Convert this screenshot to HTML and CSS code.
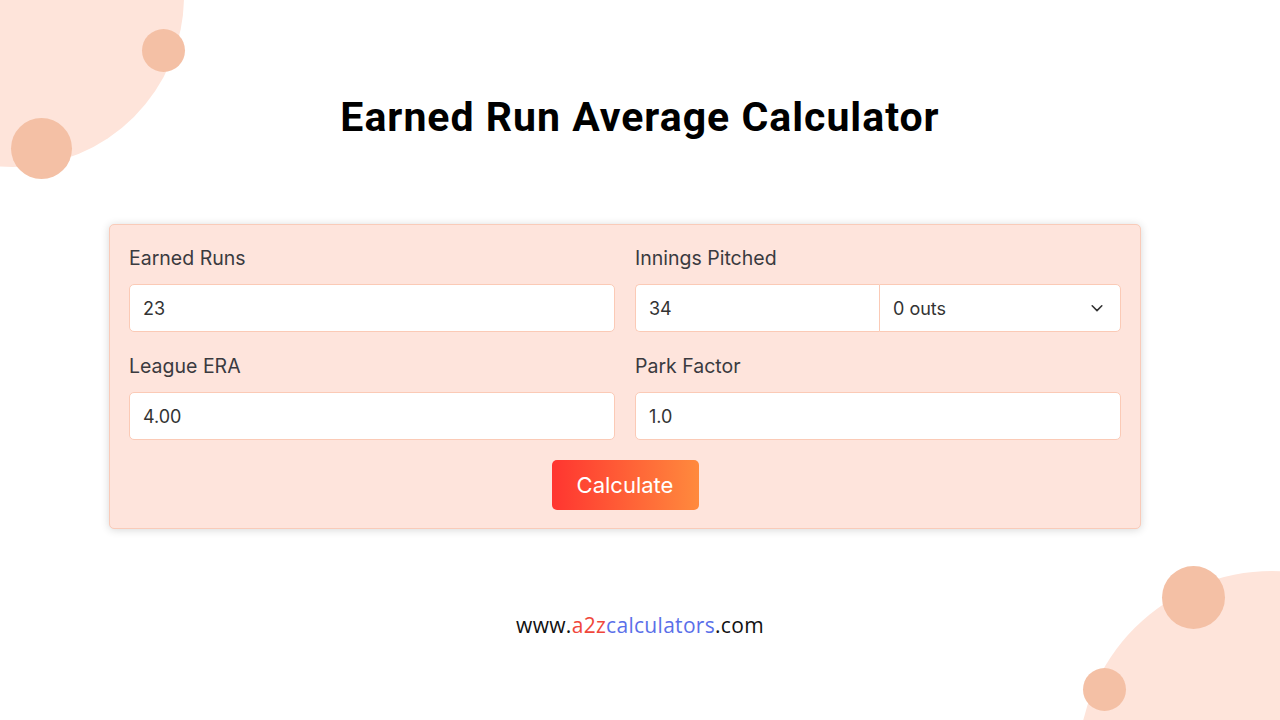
FILE: index.html
```html
<!DOCTYPE html>
<html lang="en">
<head>
<meta charset="utf-8">
<title>Earned Run Average Calculator</title>
<link rel="stylesheet" href="styles.css">
</head>
<body>
<div class="page">
  <div class="deco deco-tl-big"></div>
  <div class="deco deco-tl-dot1"></div>
  <div class="deco deco-tl-dot2"></div>
  <div class="deco deco-br-big"></div>
  <div class="deco deco-br-dot1"></div>
  <div class="deco deco-br-dot2"></div>

  <h1 class="title">Earned Run Average Calculator</h1>

  <form class="card">
    <div class="grid">
      <div class="field">
        <label class="label">Earned Runs</label>
        <div class="input">23</div>
      </div>
      <div class="field">
        <label class="label">Innings Pitched</label>
        <div class="input-group">
          <div class="input half first">34</div>
          <div class="input half select">
            <span>0 outs</span>
            <svg class="chevron" width="14" height="14" viewBox="0 0 16 16"><path d="M2.5 5.5 L8 11 L13.5 5.5" fill="none" stroke="#333" stroke-width="1.8" stroke-linecap="round" stroke-linejoin="round"/></svg>
          </div>
        </div>
      </div>
      <div class="field">
        <label class="label">League ERA</label>
        <div class="input">4.00</div>
      </div>
      <div class="field">
        <label class="label">Park Factor</label>
        <div class="input">1.0</div>
      </div>
    </div>
    <div class="actions">
      <button type="button" class="btn">Calculate</button>
    </div>
  </form>

  <p class="footer">www.<span class="red">a2z</span><span class="blue">calculators</span>.com</p>
</div>
</body>
</html>
```

FILE: styles.css
```css
* { box-sizing: border-box; }
html, body { margin: 0; padding: 0; background: #ffffff; }
.page {
  position: relative;
  width: 1280px;
  height: 720px;
  overflow: hidden;
  display: flex;
  flex-direction: column;
  align-items: center;
}
.deco { position: absolute; border-radius: 50%; }
.deco-tl-big { left: -158px; top: -175px; width: 342px; height: 342px; background: #fee4da; }
.deco-tl-dot1 { left: 142px; top: 29px; width: 43px; height: 43px; background: #f4c0a5; }
.deco-tl-dot2 { left: 11px; top: 118px; width: 61px; height: 61px; background: #f4c0a5; }
.deco-br-big { left: 1078px; top: 571px; width: 388px; height: 388px; background: #fee4da; }
.deco-br-dot1 { left: 1162px; top: 566px; width: 63px; height: 63px; background: #f4c0a5; }
.deco-br-dot2 { left: 1083px; top: 668px; width: 43px; height: 43px; background: #f4c0a5; }

.title {
  position: relative;
  margin: 93px 0 0;
  font-family: "Roboto", "Liberation Sans", sans-serif;
  font-weight: 700;
  font-size: 41px;
  letter-spacing: 1px;
  line-height: 48px;
  color: #000;
  text-align: center;
}

.card {
  position: relative;
  align-self: flex-start;
  margin: 83px 0 0 109px;
  width: 1032px;
  height: 305px;
  padding: 21px 19px 18px;
  background: #fee4dc;
  border: 1px solid #f9cbb9;
  border-radius: 5px;
  box-shadow: 0 1px 8px rgba(0, 0, 0, 0.16);
  font-family: "Inter", "Liberation Sans", sans-serif;
}
.grid {
  display: grid;
  grid-template-columns: 1fr 1fr;
  column-gap: 20px;
  row-gap: 22px;
}
.field { display: flex; flex-direction: column; }
.label {
  font-size: 19.5px;
  line-height: 24px;
  color: #3a3a3f;
  margin-bottom: 14px;
}
.input {
  height: 48px;
  display: flex;
  align-items: center;
  padding: 0 13px;
  background: #fff;
  border: 1px solid #fbcab6;
  border-radius: 5px;
  font-size: 18px;
  color: #333;
}
.input-group { display: flex; }
.input.half { flex: 1; }
.input.half.first { flex: 0 0 244px; border-radius: 5px 0 0 5px; border-right: none; }
.input.select { border-radius: 0 5px 5px 0; }
.select { justify-content: space-between; padding-right: 16px; }
.chevron { display: block; }

.actions { display: flex; justify-content: center; margin-top: 20px; }
.btn {
  width: 147px;
  height: 50px;
  border: none;
  border-radius: 5px;
  background: linear-gradient(90deg, #ff3530 0%, #ff8a3d 100%);
  color: #fff;
  font-family: "Inter", "Liberation Sans", sans-serif;
  font-size: 22px;
  cursor: pointer;
}

.footer {
  position: relative;
  margin: 84px 0 0;
  font-family: "Open Sans", "Liberation Sans", sans-serif;
  font-size: 21px;
  letter-spacing: 0.3px;
  line-height: 24px;
  color: #111;
}
.red { color: #f0473b; }
.blue { color: #5a6fe9; }
```
